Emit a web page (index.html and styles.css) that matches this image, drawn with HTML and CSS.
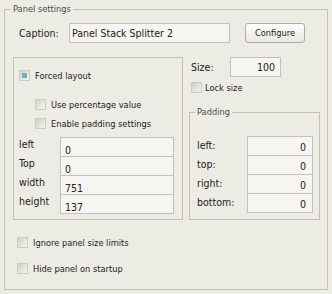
FILE: index.html
```html
<!DOCTYPE html>
<html>
<head>
<meta charset="utf-8">
<link rel="stylesheet" href="styles.css">
</head>
<body>
<fieldset class="panel">
  <legend class="legend">Panel settings</legend>
  <div class="caption-row">
    <span class="caption-label">Caption:</span>
    <div class="field caption-field">Panel Stack Splitter 2</div>
    <button class="btn">Configure</button>
  </div>
  <div class="main-row">
    <div class="layout-box">
      <label class="check forced"><span class="box checked"></span>Forced layout</label>
      <label class="check sub use"><span class="box"></span>Use percentage value</label>
      <label class="check sub enable"><span class="box"></span>Enable padding settings</label>
      <div class="coords">
        <div class="coord-row"><span class="coord-label">left</span><div class="field coord-field">0</div></div>
        <div class="coord-row"><span class="coord-label">Top</span><div class="field coord-field">0</div></div>
        <div class="coord-row"><span class="coord-label">width</span><div class="field coord-field">751</div></div>
        <div class="coord-row"><span class="coord-label">height</span><div class="field coord-field">137</div></div>
      </div>
    </div>
    <div class="side">
      <div class="size-row">
        <span class="size-label">Size:</span>
        <div class="field size-field">100</div>
      </div>
      <label class="check lock"><span class="box"></span>Lock size</label>
      <fieldset class="padding">
        <legend class="legend small-legend">Padding</legend>
        <div class="pad-rows">
          <div class="pad-row"><span class="pad-label">left:</span><div class="field pad-field">0</div></div>
          <div class="pad-row"><span class="pad-label">top:</span><div class="field pad-field">0</div></div>
          <div class="pad-row"><span class="pad-label">right:</span><div class="field pad-field">0</div></div>
          <div class="pad-row"><span class="pad-label">bottom:</span><div class="field pad-field">0</div></div>
        </div>
      </fieldset>
    </div>
  </div>
  <label class="check ignore"><span class="box"></span>Ignore panel size limits</label>
  <label class="check hide"><span class="box"></span>Hide panel on startup</label>
</fieldset>
</body>
</html>
```

FILE: styles.css
```css
* { box-sizing: border-box; }

html, body {
  margin: 0;
  padding: 0;
  background: #ECEBE4;
  width: 332px;
  height: 294px;
  overflow: hidden;
}

body {
  padding-top: 3px;
  font-family: "DejaVu Sans Condensed", "Liberation Sans", Arial, sans-serif;
  font-size: 10.5px;
  line-height: 13px;
  color: #222;
}

.panel {
  margin: 0 4px;
  padding: 0;
  height: 287px;
  border: 1px solid #C3C1B7;
  min-width: 0;
}

.legend {
  margin-left: 6px;
  padding: 0 2px;
  font-size: 9.2px;
  line-height: 12px;
  color: #4d4d4d;
}

.caption-row {
  display: flex;
  align-items: center;
  margin-top: 8px;
  height: 20px;
}

.caption-label {
  width: 50px;
  margin-left: 14px;
}

.field {
  border: 1px solid #C3C2BA;
  background: #F6F5F1;
  font-size: 10.5px;
  line-height: 13px;
  color: #222;
  white-space: nowrap;
}

.caption-field {
  width: 161px;
  height: 20px;
  padding: 3px 0 0 2px;
}

.btn {
  margin-left: 15px;
  width: 60px;
  height: 20px;
  padding: 0;
  border: 1px solid #AEADA4;
  border-radius: 3px;
  background: linear-gradient(#FEFEFC, #E9E8E1);
  font-family: inherit;
  font-size: 9.2px;
  line-height: 12px;
  color: #222;
}

.main-row {
  display: flex;
  margin-top: 14px;
  margin-left: 8px;
}

.layout-box {
  width: 170px;
  height: 163px;
  border: 1px solid #C3C1B7;
  padding: 12px 0 0 5px;
}

.check {
  display: flex;
  align-items: center;
  height: 11px;
  font-size: 9.2px;
  line-height: 11px;
  color: #222;
  white-space: nowrap;
}

.box {
  flex: none;
  width: 11px;
  height: 11px;
  margin-right: 5px;
  border: 1px solid #CCCBC3;
  background: linear-gradient(135deg, #D0CFC7 0%, #E3E2DC 50%, #F5F5F2 100%);
  display: flex;
  align-items: center;
  justify-content: center;
}

.box.checked::after {
  content: "";
  width: 5px;
  height: 5px;
  background: #62B7BF;
}

.sub { margin-left: 16px; }
.use { margin-top: 18px; }
.enable { margin-top: 8px; }

.coords {
  margin-top: 8px;
}

.coord-row {
  display: flex;
  align-items: flex-start;
}

.coord-row + .coord-row { margin-top: -1px; }

.coord-label {
  width: 41px;
  margin-top: 1px;
}

.coord-field {
  width: 114px;
  height: 20px;
  padding: 6px 0 0 4px;
}

.side {
  display: flex;
  flex-direction: column;
  width: 131px;
  margin-left: 6px;
}

.size-row {
  display: flex;
  align-items: center;
  height: 20px;
}

.size-label {
  width: 39px;
  margin-left: 2px;
}

.size-field {
  width: 51px;
  height: 20px;
  padding: 3px 5px 0 0;
  text-align: right;
}

.lock {
  margin-top: 5px;
  margin-left: 2px;
}

.lock .box { margin-right: 3px; }

.padding {
  flex: 1;
  margin: 13px 0 0 0;
  padding: 0;
  border: 1px solid #C3C1B7;
  min-width: 0;
}

.small-legend { margin-left: 5px; }

.pad-rows {
  margin-top: 18px;
  padding-left: 7px;
}

.pad-row {
  display: flex;
  align-items: flex-start;
}

.pad-row + .pad-row { margin-top: -1px; }

.pad-label {
  width: 50px;
  margin-top: 3px;
}

.pad-field {
  width: 66px;
  height: 20px;
  padding: 4px 6px 0 0;
  text-align: right;
}

.ignore {
  margin-top: 17px;
  margin-left: 12px;
}

.hide {
  margin-top: 15px;
  margin-left: 12px;
}
```
